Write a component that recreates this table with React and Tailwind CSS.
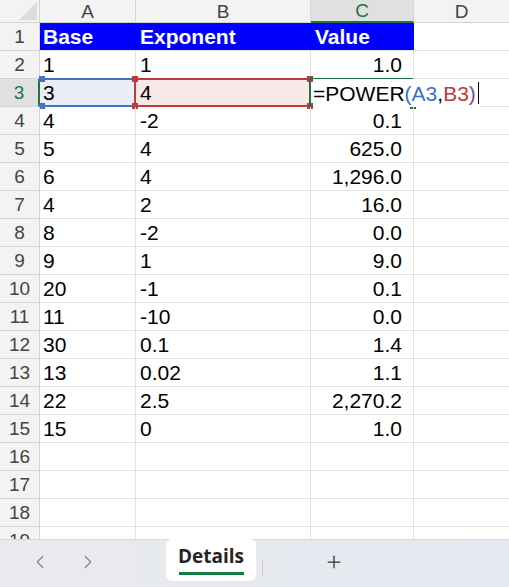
import { ChevronLeft, ChevronRight, Plus } from 'lucide-react';

const rows = [
  ['1', '1', '1.0'],
  ['3', '4', ''],
  ['4', '-2', '0.1'],
  ['5', '4', '625.0'],
  ['6', '4', '1,296.0'],
  ['4', '2', '16.0'],
  ['8', '-2', '0.0'],
  ['9', '1', '9.0'],
  ['20', '-1', '0.1'],
  ['11', '-10', '0.0'],
  ['30', '0.1', '1.4'],
  ['13', '0.02', '1.1'],
  ['22', '2.5', '2,270.2'],
  ['15', '0', '1.0'],
  ['', '', ''],
  ['', '', ''],
  ['', '', ''],
  ['', '', ''],
];

const cols = 'grid grid-cols-[40px_96px_175px_103px_1fr]';

function Corner({ x, y, color }) {
  return <span className={`absolute w-[6px] h-[6px] ${color}`} style={{ left: x, top: y }} />;
}

export default function App() {
  return (
    <div className="w-[509px] h-[587px] overflow-hidden bg-white flex flex-col font-['Liberation_Sans',Arial,sans-serif]">
      <div className="flex-1 overflow-hidden">
        {/* Column headers */}
        <div className={`${cols} h-[23px] bg-[#f3f3f3] text-[19px] text-[#444] leading-none`}>
          <div className="relative border-r border-b border-[#d4d4d4] overflow-hidden">
            <span className="absolute right-[2px] bottom-[2px] w-0 h-0 border-l-[18px] border-l-transparent border-b-[18px] border-b-[#dcdcdc]" />
          </div>
          <div className="flex items-center justify-center border-r border-b border-[#d4d4d4]">A</div>
          <div className="flex items-center justify-center border-r border-b border-[#d4d4d4]">B</div>
          <div className="flex items-center justify-center border-r border-[#d4d4d4] border-b-2 border-b-[#217346] bg-[#e0e0e0] text-[#217346]">C</div>
          <div className="flex items-center justify-center border-b border-[#d4d4d4]">D</div>
        </div>

        {/* Row 1 header */}
        <div className={`${cols} h-[28px] text-[21px] leading-none`}>
          <div className="flex items-center justify-center bg-[#f3f3f3] text-[19px] text-[#444] border-r border-b border-[#d4d4d4]">1</div>
          <div className="flex items-center pl-[3px] bg-[#0000ff] text-white font-bold border-b border-[#e1e1e1]">Base</div>
          <div className="flex items-center pl-[4px] bg-[#0000ff] text-white font-bold border-b border-[#e1e1e1]">Exponent</div>
          <div className="flex items-center pl-[4px] bg-[#0000ff] text-white font-bold border-b border-[#e1e1e1]">Value</div>
          <div className="border-b border-[#e1e1e1]" />
        </div>

        {rows.map((r, i) => {
          const n = i + 2;
          const active = n === 3;
          return (
            <div key={n} className={`${cols} relative h-[28px] text-[21px] leading-none text-black`}>
              <div
                className={`flex items-center justify-center text-[19px] border-b border-[#d4d4d4] ${
                  active
                    ? 'bg-[#e0e0e0] text-[#217346] border-r-2 border-r-[#217346]'
                    : 'bg-[#f3f3f3] text-[#444] border-r border-r-[#d4d4d4]'
                }`}
              >
                {n}
              </div>
              <div className={`flex items-center pl-[3px] border-r border-b border-[#e1e1e1] ${active ? 'bg-[#e9eef8]' : ''}`}>{r[0]}</div>
              <div className={`flex items-center pl-[4px] border-r border-b border-[#e1e1e1] ${active ? 'bg-[#f8e8e8]' : ''}`}>{r[1]}</div>
              <div className="flex items-center justify-end pr-[11px] border-r border-b border-[#e1e1e1]">{r[2]}</div>
              <div className="border-b border-[#e1e1e1]" />

              {active && (
                <>
                  {/* A3 range (blue) */}
                  <div className="absolute left-[40px] top-[-1px] w-[94px] h-[29px] border-y-2 border-[#4472c4] pointer-events-none" />
                  <Corner x={39} y={-3} color="bg-[#4472c4]" />
                  <Corner x={39} y={24} color="bg-[#4472c4]" />
                  {/* B3 range (red) */}
                  <div className="absolute left-[134px] top-[-1px] w-[176px] h-[29px] border-y-2 border-l-2 border-[#c0393b] pointer-events-none" />
                  <Corner x={132} y={-3} color="bg-[#c0393b]" />
                  <Corner x={132} y={24} color="bg-[#c0393b]" />
                  <Corner x={307} y={-3} color="bg-[#c0393b]" />
                  <Corner x={307} y={24} color="bg-[#c0393b]" />
                  {/* C3 active editing cell */}
                  <div className="absolute left-[309px] top-[-1px] w-[104px] h-[29px] border-y-2 border-l-2 border-[#217346] pointer-events-none" />
                  <Corner x={410} y={24} color="bg-[#217346]" />
                  <div className="absolute left-[313px] top-0 h-[28px] flex items-center whitespace-nowrap bg-white pr-[1px]">
                    <span>=POWER</span>
                    <span className="text-[#3d6fc4]">(</span>
                    <span className="text-[#3d6fc4]">A3</span>
                    <span>,</span>
                    <span className="text-[#c0393b]">B3</span>
                    <span className="text-[#7a4a8a]">)</span>
                    <span className="ml-[2px] w-px h-[22px] bg-black" />
                  </div>
                </>
              )}
            </div>
          );
        })}
      </div>

      {/* Sheet tab bar */}
      <div className="h-[48px] shrink-0 flex items-start border-t border-[#d8d8d8] bg-gradient-to-r from-[#e8eaee] to-[#e5e8f0]">
        <div className="w-[166px] h-[44px] flex items-center text-[#8a8a8a]">
          <ChevronLeft size={22} strokeWidth={1.5} className="ml-[29px]" />
          <ChevronRight size={22} strokeWidth={1.5} className="ml-[26px]" />
        </div>
        <div className="w-[90px] h-[42px] -mt-px bg-white rounded-[6px] flex flex-col items-center justify-center pt-[2px]">
          <span className="text-[19px] font-bold text-[#242424] leading-none font-['Open_Sans',Arial,sans-serif]">Details</span>
          <span className="mt-[6px] w-[65px] h-[3px] bg-[#107c41]" />
        </div>
        <div className="ml-[6px] mt-[20px] w-px h-[15px] bg-[#c8c8c8]" />
        <div className="ml-[61px] h-[44px] flex items-center text-[#333]">
          <Plus size={20} strokeWidth={1.5} />
        </div>
      </div>
    </div>
  );
}
